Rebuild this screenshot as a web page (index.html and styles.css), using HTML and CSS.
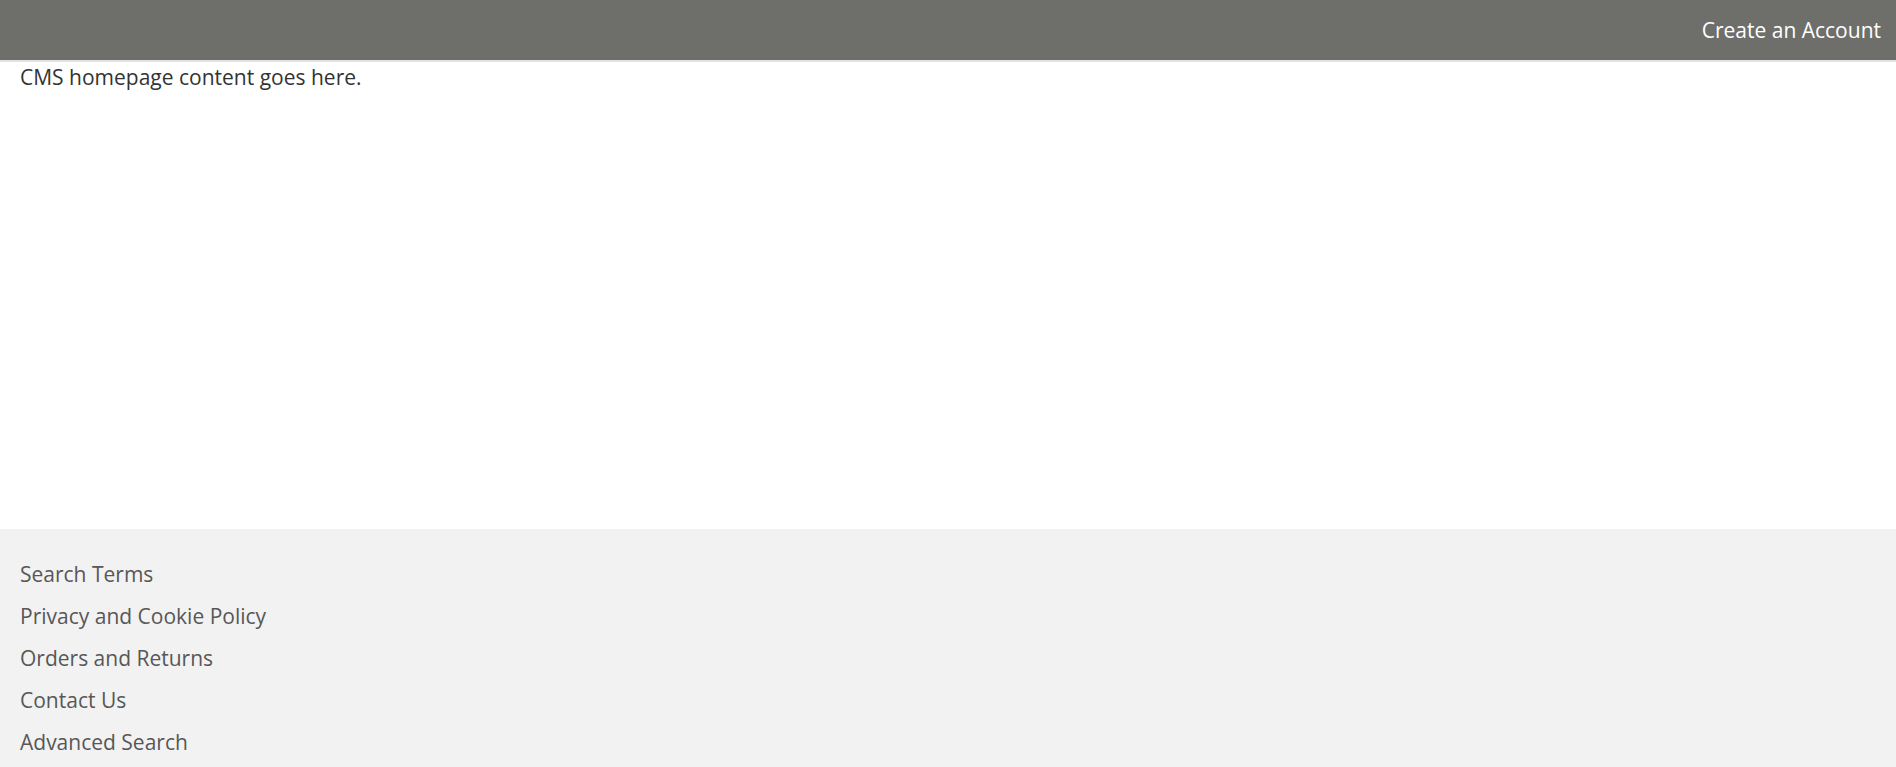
FILE: index.html
```html
<!DOCTYPE html>
<html lang="en">
<head>
<meta charset="utf-8">
<title>Home Page</title>
<link rel="stylesheet" href="styles.css">
</head>
<body>
<div class="page">
  <header class="panel-header">
    <ul class="header-links">
      <li><a href="#">Create an Account</a></li>
    </ul>
  </header>
  <main class="main">
    <p class="cms-text">CMS homepage content goes here.</p>
  </main>
  <footer class="page-footer">
    <ul class="footer-links">
      <li><a href="#">Search Terms</a></li>
      <li><a href="#">Privacy and Cookie Policy</a></li>
      <li><a href="#">Orders and Returns</a></li>
      <li><a href="#">Contact Us</a></li>
      <li><a href="#">Advanced Search</a></li>
    </ul>
  </footer>
</div>
</body>
</html>
```

FILE: styles.css
```css
* { box-sizing: border-box; }
html, body {
  margin: 0;
  padding: 0;
  height: 100%;
}
body {
  font-family: "Open Sans", "Liberation Sans", sans-serif;
  font-size: 21px;
  line-height: 30px;
  color: #333333;
  background: #ffffff;
}
.page {
  display: flex;
  flex-direction: column;
  min-height: 100vh;
}
.panel-header {
  height: 62px;
  background: #6e6f6b;
  border-bottom: 2px solid #e3e3e3;
  display: flex;
  align-items: center;
  justify-content: flex-end;
  padding: 0 15px 0 20px;
}
.header-links {
  list-style: none;
  margin: 0;
  padding: 0;
  display: flex;
}
.header-links a {
  color: #ffffff;
  text-decoration: none;
}
.main {
  flex: 1;
  padding: 0 20px;
}
.cms-text {
  margin: 0;
}
.page-footer {
  background: #f2f2f2;
  padding: 30px 20px 10px;
}
.footer-links {
  list-style: none;
  margin: 0;
  padding: 0;
  display: flex;
  flex-direction: column;
  gap: 12px;
}
.footer-links a {
  color: #575757;
  text-decoration: none;
}
```
